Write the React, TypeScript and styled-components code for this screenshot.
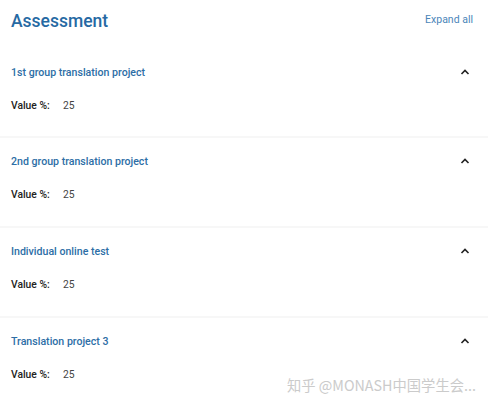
import React from 'react';
import styled, { createGlobalStyle } from 'styled-components';

const GlobalStyle = createGlobalStyle`
  body {
    margin: 0;
    background: #fff;
    font-family: Roboto, "Noto Sans", Arial, sans-serif;
  }
`;

const Page = styled.div`
  position: relative;
  width: 488px;
  height: 406px;
  overflow: hidden;
  background: #fff;
`;

const Header = styled.div`
  display: flex;
  justify-content: space-between;
  align-items: center;
  padding: 9px 15px 14px 11px;
  height: 24px;
`;

const Title = styled.h2`
  margin: 0;
  font-size: 17.5px;
  line-height: 24px;
  font-weight: 500;
  color: #2669a3;
`;

const ExpandAll = styled.button`
  border: none;
  background: none;
  padding: 0;
  font-family: inherit;
  font-size: 10.5px;
  color: #4b86b9;
  cursor: pointer;
  margin-top: -3px;
`;

const Section = styled.section<{ $first?: boolean }>`
  border-top: ${(p) => (p.$first ? 'none' : '2px solid #f7f7f7')};
  padding: ${(p) => (p.$first ? '17px 15px 23px 11px' : '15px 15px 24px 11px')};
`;

const SectionHead = styled.div`
  display: flex;
  justify-content: space-between;
  align-items: center;
  height: 16px;
`;

const SectionTitle = styled.span`
  font-size: 10.6px;
  font-weight: 500;
  color: #2d6ea6;
`;

const Chevron = styled.svg`
  width: 10px;
  height: 10px;
  margin-right: 3px;
`;

const ValueRow = styled.div`
  display: flex;
  align-items: center;
  height: 16px;
  margin-top: 17px;
  font-size: 10.3px;
`;

const ValueLabel = styled.span`
  font-weight: 500;
  color: #222;
  width: 52px;
`;

const ValueNum = styled.span`
  color: #444;
`;

const Watermark = styled.div`
  position: absolute;
  left: 287px;
  top: 374px;
  font-family: "Noto Sans CJK SC", sans-serif;
  font-size: 14.3px;
  color: #cbcbcb;
  white-space: nowrap;
`;

const items = [
  '1st group translation project',
  '2nd group translation project',
  'Individual online test',
  'Translation project 3',
];

const App: React.FC = () => {
  return (
    <Page>
      <GlobalStyle />
      <Header>
        <Title>Assessment</Title>
        <ExpandAll>Expand all</ExpandAll>
      </Header>
      {items.map((name, i) => (
        <Section key={name} $first={i === 0}>
          <SectionHead>
            <SectionTitle>{name}</SectionTitle>
            <Chevron viewBox="0 0 10 10">
              <path d="M1.5 7 L5 3.5 L8.5 7" fill="none" stroke="#222" strokeWidth="1.6" />
            </Chevron>
          </SectionHead>
          <ValueRow>
            <ValueLabel>Value %:</ValueLabel>
            <ValueNum>25</ValueNum>
          </ValueRow>
        </Section>
      ))}
      <Watermark>知乎 @MONASH中国学生会...</Watermark>
    </Page>
  );
};

export default App;
